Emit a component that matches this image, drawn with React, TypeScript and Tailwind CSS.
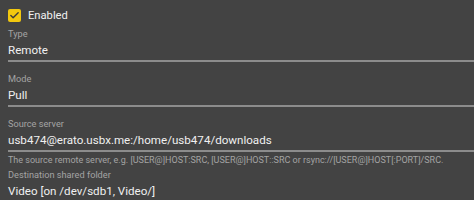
import { Check } from "lucide-react";

// ── Form field ─────────────────────────────────────────

function Field({ label, value, className = "" }: { label: string; value: string; className?: string }) {
  return (
    <div className={className}>
      <div className="text-[9.2px] leading-[12px] text-[#a3a3a3]">{label}</div>
      <div className="border-b-2 border-[#8c8c8c] text-[11.6px] leading-[20px] text-[#f0f0f0]">{value}</div>
    </div>
  );
}

export default function App() {
  return (
    <div
      className="h-[200px] w-[474px] overflow-hidden bg-[#434343] pl-2"
      style={{ fontFamily: "Roboto, 'Noto Sans', sans-serif" }}
    >
      <div className="mt-[9px] flex items-center gap-[7px]">
        <span className="flex h-[13px] w-[13px] items-center justify-center rounded-[2px] bg-[#f2c80f]">
          <Check size={11} strokeWidth={3} className="text-[#3b3b3b]" />
        </span>
        <span className="text-[11.2px] leading-[13px] text-[#f0f0f0]">Enabled</span>
      </div>

      <Field label="Type" value="Remote" className="mt-[6px]" />
      <Field label="Mode" value="Pull" className="mt-[11px]" />
      <Field label="Source server" value="usb474@erato.usbx.me:/home/usb474/downloads" className="mt-[11px]" />

      <div className="mt-[2px] text-[9px] leading-[12px] text-[#a3a3a3]">
        The source remote server, e.g. [USER@]HOST:SRC, [USER@]HOST::SRC or rsync://[USER@]HOST[:PORT]/SRC.
      </div>

      <div className="mt-[3px] text-[9.2px] leading-[12px] text-[#a3a3a3]">Destination shared folder</div>
      <div className="text-[11.6px] leading-[20px] text-[#f0f0f0]">Video [on /dev/sdb1, Video/]</div>
    </div>
  );
}
